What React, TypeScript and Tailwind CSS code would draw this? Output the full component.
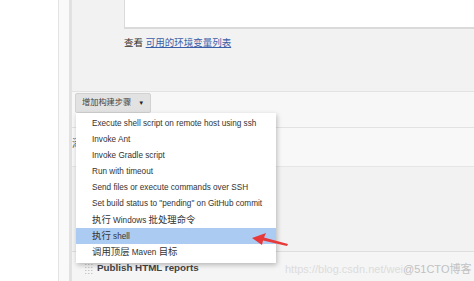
// Jenkins 构建步骤下拉菜单
const FONT = { fontFamily: '"Liberation Sans", "Noto Sans CJK SC", sans-serif' };

const MENU_ITEMS = [
  'Execute shell script on remote host using ssh',
  'Invoke Ant',
  'Invoke Gradle script',
  'Run with timeout',
  'Send files or execute commands over SSH',
  'Set build status to "pending" on GitHub commit',
  '执行 Windows 批处理命令',
  '执行 shell',
  '调用顶层 Maven 目标',
];

const ACTIVE = '执行 shell';

// 中文字符略大一些，和截图里的比例一致
function MixedText({ text }: { text: string }) {
  const parts = text.split(/([\u4e00-\u9fff]+)/);
  return (
    <span className="whitespace-pre">
      {parts.map((p, i) =>
        /[\u4e00-\u9fff]/.test(p) ? (
          <span key={i} className="text-[9.4px]">
            {p}
          </span>
        ) : (
          p
        )
      )}
    </span>
  );
}

function Grip() {
  return (
    <svg width="8" height="10" viewBox="0 0 8 10" className="shrink-0">
      {[0, 3, 6].map((x) =>
        [0, 3, 6, 9].map((y) => (
          <rect key={`${x}-${y}`} x={x} y={y} width="1.5" height="1" fill="#c8c8c8" />
        ))
      )}
    </svg>
  );
}

export default function App() {
  return (
    <div
      className="relative w-[474px] h-[281px] overflow-hidden bg-white flex text-[#333]"
      style={FONT}
    >
      {/* 左侧空白 */}
      <div className="w-[58px] shrink-0 bg-white" />
      <div className="w-[11px] shrink-0 border-l border-[#e3e3e3] bg-[#f9f9f9]" />

      {/* 主区域 */}
      <div className="flex-1 flex flex-col border-l-[3px] border-[#e1e1e1] bg-[#f2f2f2]">
        {/* 上一个构建步骤 */}
        <div className="h-[92px] shrink-0 pl-[52px] border-b border-[#e2e2e2]">
          <div className="h-[29px] bg-white border-l border-b-2 border-[#dadada]" />
          <div className="mt-[8px] text-[9.5px] leading-[12px]">
            查看 <span className="text-[#3a5fa8] underline">可用的环境变量列表</span>
          </div>
        </div>

        {/* 增加构建步骤 */}
        <div className="h-[36px] shrink-0 flex items-start bg-[#f7f7f7] border-b border-[#e2e2e2] pl-[3px] pt-[1px]">
          <div className="flex items-center gap-[7px] h-[20px] px-[6px] bg-[#e2e2e2] border border-[#d2d2d2] rounded-[2px] text-[8.2px] text-[#444]">
            增加构建步骤
            <span className="text-[6px] text-[#222]">▼</span>
          </div>
        </div>

        {/* 构建后操作 */}
        <div className="h-[38px] shrink-0 bg-[#f8f8f8] pt-[8px] text-[10px] text-[#555]">
          添加构建后操作步骤
        </div>
        <div className="h-[86px] shrink-0 bg-[#f2f2f2] border-t border-[#e6e6e6] border-b border-b-[#dedede]" />

        <div className="flex-1 bg-[#f5f5f5] flex items-center gap-[4px] pl-[13px] pt-[4px]">
          <Grip />
          <span className="text-[9.8px] font-bold text-[#444]">Publish HTML reports</span>
        </div>
      </div>

      {/* 下拉菜单 */}
      <div className="absolute left-[76px] top-[113px] w-[200px] bg-white pt-[3px] pb-[3px] shadow-[1px_2px_5px_rgba(0,0,0,0.25)]">
        {MENU_ITEMS.map((item) => (
          <div
            key={item}
            className={`h-[16px] flex items-center pl-[16px] text-[8.2px] whitespace-nowrap ${
              item === ACTIVE ? 'bg-[#abcbf3]' : ''
            }`}
          >
            <MixedText text={item} />
          </div>
        ))}
      </div>

      {/* 红色箭头 */}
      <svg className="absolute left-[248px] top-[230px]" width="44" height="20" viewBox="0 0 44 20">
        <polygon points="4,8 18,3 16,7.5 40,14 39,16 15,10.5 14,15" fill="#e8393a" />
      </svg>

      {/* 水印 */}
      <div className="absolute left-[285px] top-[261px] text-[11px] whitespace-nowrap">
        <span className="text-[#dcdcdc]">https://blog.csdn.net/wei</span>
        <span className="text-[#c2c2c2]">@51CTO博客</span>
      </div>
    </div>
  );
}
